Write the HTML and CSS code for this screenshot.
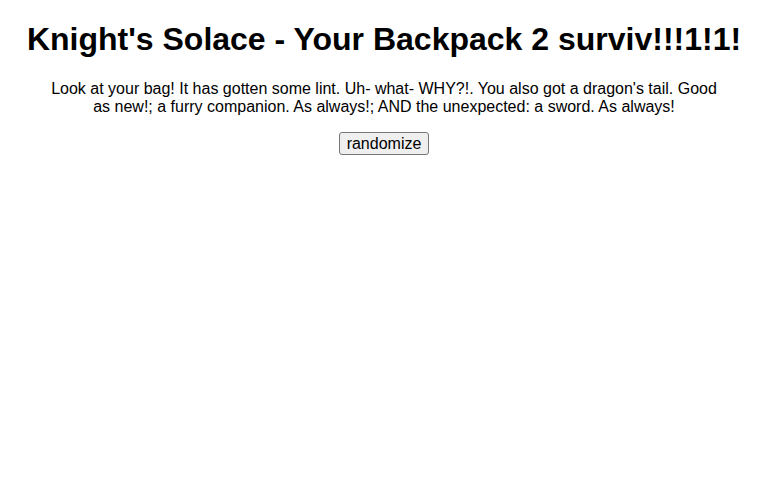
FILE: index.html
```html
<!DOCTYPE html>
<html lang="en">
<head>
	<meta charset="UTF-8">
	<meta name="viewport" content="width=device-width, initial-scale=1.0">
	<title>Knight's Solace</title>
	<link rel="stylesheet" href="styles.css">
</head>

<body>
	<div class="page">
		<h1>Knight's Solace - Your Backpack 2 surviv!!!1!1!</h1>
		<p class="bag">Look at your bag! It has gotten some lint. Uh- what- WHY?!. You also got a dragon's tail. Good as new!; a furry companion. As always!; AND the unexpected: a sword. As always!</p>
		<button class="roll" type="button">randomize</button>
	</div>
</body>

</html>
```

FILE: styles.css
```css
body {
	margin: 0 8px 8px;
	font-family: "Liberation Sans", Arial, sans-serif;
	font-size: 16px;
	color: #000;
	background: #fff;
}
.page {
	text-align: center;
	padding-top: 0.1px;
}
h1 {
	font-size: 32px;
	font-weight: bold;
	margin: 21.3px 0 21.44px;
}
.bag {
	margin: 16px 0;
	padding: 0 42px;
}
.roll {
	font: inherit;
	color: #000;
	background: #efefef;
	border: 1px solid #767676;
	border-radius: 3px;
	padding: 2px 7px 1px;
}
```
